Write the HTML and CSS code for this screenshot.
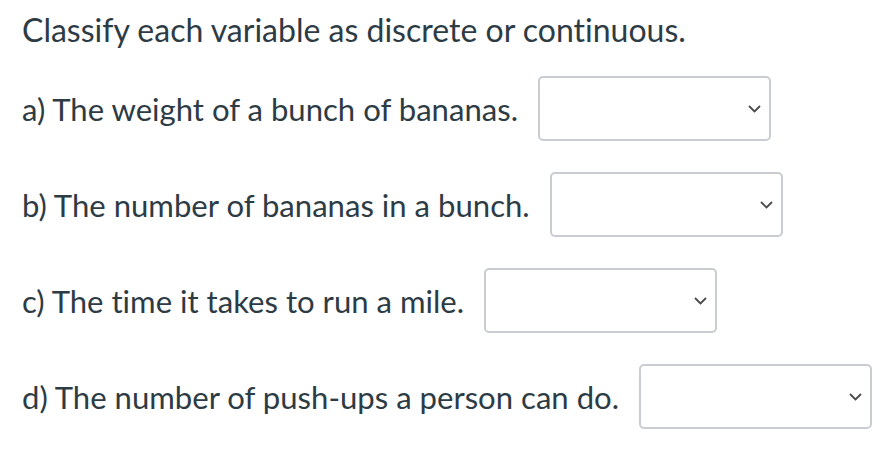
FILE: index.html
```html
<!DOCTYPE html>
<html>
<head>
<meta charset="utf-8">
<link rel="stylesheet" href="styles.css">
</head>
<body>
<div class="page">
  <p class="title">Classify each variable as discrete or continuous.</p>
  <div class="row"><span class="label">a) The weight of a bunch of bananas.</span><span class="select"><svg class="chev" viewBox="0 0 13 8" width="13" height="8"><path d="M1 1 L6.5 6.5 L12 1" fill="none" stroke="#4a4a4a" stroke-width="1.8"/></svg></span></div>
  <div class="row"><span class="label">b) The number of bananas in a bunch.</span><span class="select"><svg class="chev" viewBox="0 0 13 8" width="13" height="8"><path d="M1 1 L6.5 6.5 L12 1" fill="none" stroke="#4a4a4a" stroke-width="1.8"/></svg></span></div>
  <div class="row"><span class="label">c) The time it takes to run a mile.</span><span class="select"><svg class="chev" viewBox="0 0 13 8" width="13" height="8"><path d="M1 1 L6.5 6.5 L12 1" fill="none" stroke="#4a4a4a" stroke-width="1.8"/></svg></span></div>
  <div class="row"><span class="label">d) The number of push-ups a person can do.</span><span class="select"><svg class="chev" viewBox="0 0 13 8" width="13" height="8"><path d="M1 1 L6.5 6.5 L12 1" fill="none" stroke="#4a4a4a" stroke-width="1.8"/></svg></span></div>
</div>
</body>
</html>
```
FILE: styles.css
```css
html, body { margin: 0; padding: 0; background: #fff; }
.page {
  font-family: Lato, "Open Sans", sans-serif;
  font-variant-ligatures: none;
  color: #2d3b45;
  padding: 12px 0 0 22px;
}
.title {
  margin: 0 0 28px 0;
  font-size: 32px;
  line-height: 36px;
}
.row {
  display: flex;
  align-items: center;
  height: 65px;
  margin-bottom: 31px;
  font-size: 31.1px;
}
.select {
  margin-left: 20px;
  width: 221px;
  height: 61px;
  border: 2px solid #c9cdd1;
  border-radius: 5px;
  display: flex;
  align-items: center;
  justify-content: flex-end;
  padding-right: 8px;
  box-sizing: content-box;
}
.chev { display: block; }
```
